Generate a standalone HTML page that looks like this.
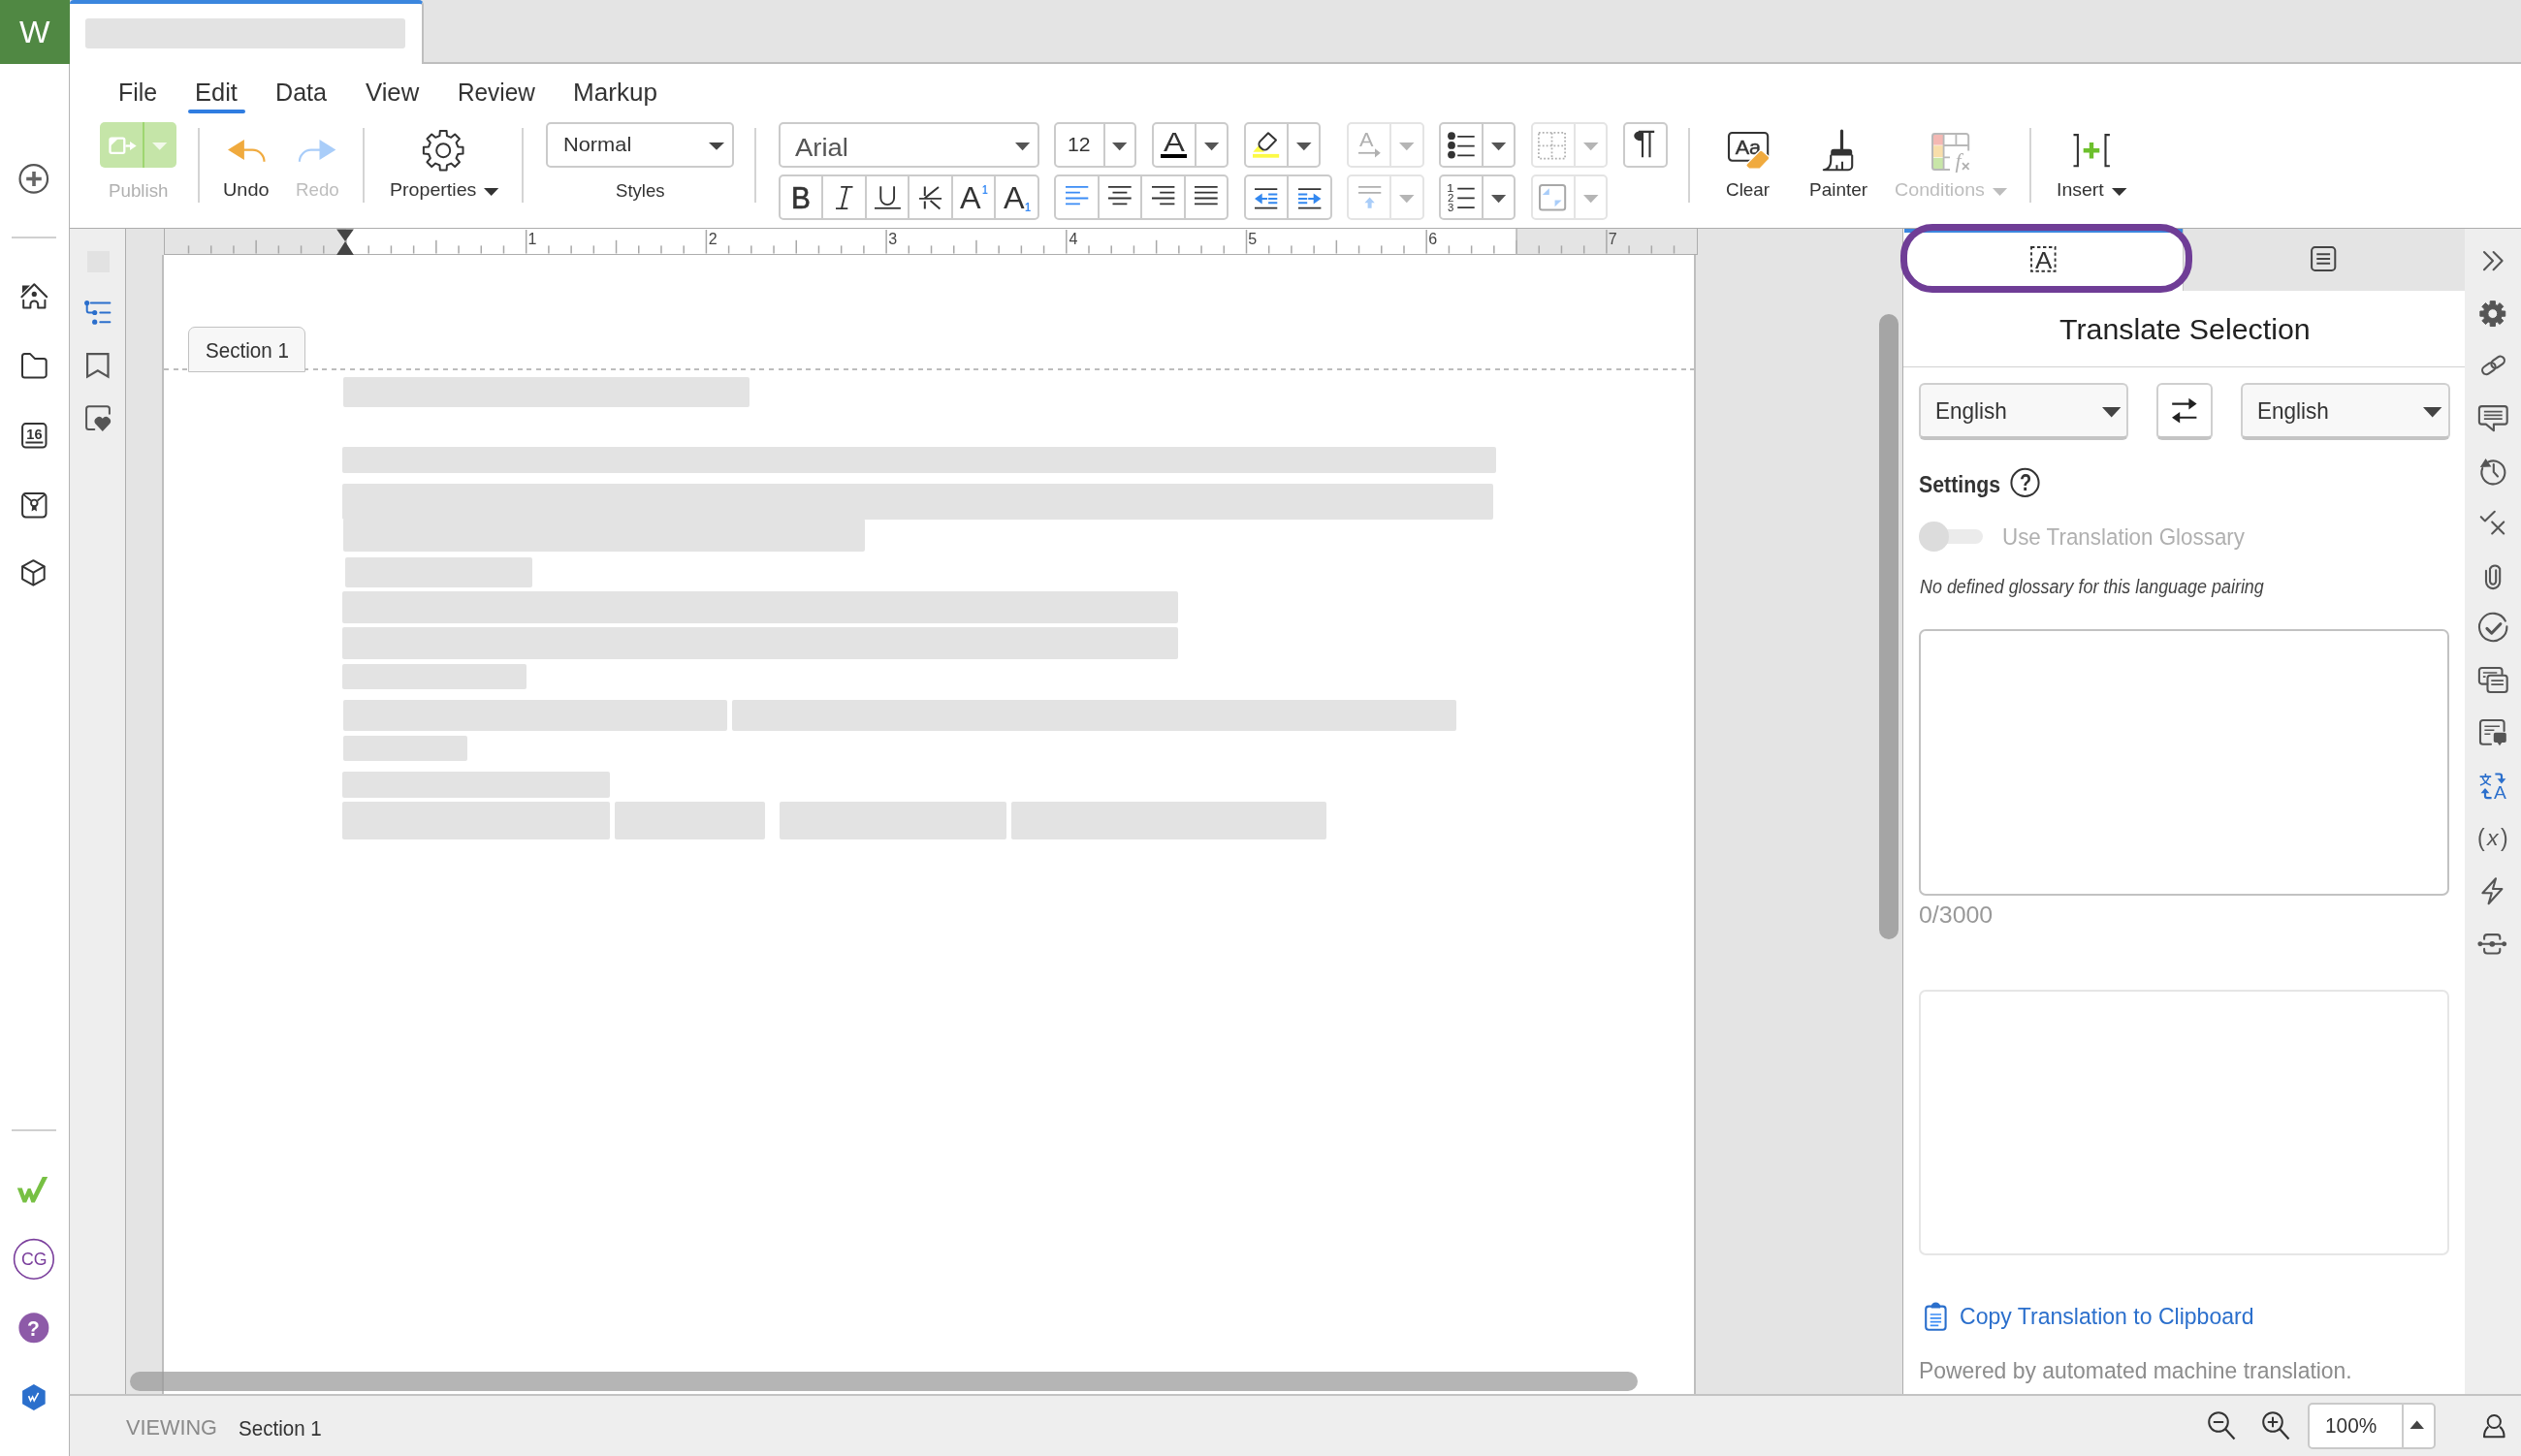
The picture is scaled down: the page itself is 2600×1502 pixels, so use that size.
<!DOCTYPE html>
<html lang="en"><head><meta charset="utf-8"><title>Document editor</title>
<style>
*{box-sizing:border-box;margin:0;padding:0}
html,body{width:2600px;height:1502px;overflow:hidden;background:#fff}
body{position:relative;font-family:"Liberation Sans",sans-serif;color:#333}
div{position:absolute}
.app{left:0;top:0;width:2600px;height:1502px;will-change:transform}
.i{position:absolute;overflow:visible}
.t{position:absolute;white-space:nowrap;line-height:1;transform-origin:0 0;display:block}
.btn{background:#fff;border:2px solid #cbcbcb;border-radius:5px}
.btn.dis{border-color:#e4e4e4}
.vd{background:#cbcbcb;width:2px}
.sep{background:#d4d4d4;width:2px}
</style></head>
<body>
<div class="app">
<!-- top tab bar -->
<div style="left:72.0px;top:0.0px;width:2528.0px;height:66.0px;background:#e4e4e4;border-bottom:2px solid #bebebe"></div>
<div style="left:0.0px;top:0.0px;width:72.0px;height:66.0px;background:#508843"></div>
<span class="t" style="left:20.03px;top:18px;font-size:31.5px;color:#fff;transform:scaleX(1.0584);">W</span>
<div style="left:72.0px;top:0.0px;width:365.0px;height:66.0px;background:#fff;border-top:4px solid #3b86de;border-right:2px solid #bebebe;border-radius:4px 5px 0 0"></div>
<div style="left:72.0px;top:63.0px;width:363.0px;height:4.0px;background:#fff"></div>
<div style="left:88.0px;top:19.0px;width:330.0px;height:31.0px;background:#e3e3e3;border-radius:3px"></div>
<!-- left app sidebar -->
<div style="left:0.0px;top:66.0px;width:72.0px;height:1436.0px;background:#fff;border-right:1px solid #b4b4b4"></div>
<div style="left:12.0px;top:244.0px;width:46.0px;height:2.0px;background:#d0d0d0"></div>
<div style="left:12.0px;top:1165.0px;width:46.0px;height:2.0px;background:#d0d0d0"></div>
<!-- menu bar -->
<span class="t" style="left:122.38px;top:82px;font-size:26px;color:#333;transform:scaleX(0.9562);">File</span>
<span class="t" style="left:201.43px;top:82px;font-size:26px;color:#333;transform:scaleX(0.9788);">Edit</span>
<span class="t" style="left:284.46px;top:82px;font-size:26px;color:#333;transform:scaleX(0.9655);">Data</span>
<span class="t" style="left:377.23px;top:82px;font-size:26px;color:#333;transform:scaleX(0.9879);">View</span>
<span class="t" style="left:472.12px;top:82px;font-size:26px;color:#333;transform:scaleX(0.9362);">Review</span>
<span class="t" style="left:591.37px;top:82px;font-size:26px;color:#333;transform:scaleX(1.0031);">Markup</span>
<div style="left:193.9px;top:112.8px;width:58.9px;height:4.0px;background:#2f7de1;border-radius:2px"></div>
<!-- toolbar -->
<div style="left:72.0px;top:235.0px;width:2528.0px;height:1.0px;background:#adadad"></div>
<div style="left:103.0px;top:126.2px;width:78.9px;height:46.4px;background:#c5e5a8;border-radius:5px"></div>
<div style="left:146.9px;top:126.2px;width:2.4px;height:46.4px;background:#9ed670"></div>
<span class="t" style="left:111.84px;top:188px;font-size:18.5px;color:#b0b0b0;transform:scaleX(1.0133);">Publish</span>
<div class="sep" style="left:204.0px;top:132.0px;width:2.0px;height:76.8px;"></div>
<span class="t" style="left:229.52px;top:187px;font-size:18.5px;color:#333;transform:scaleX(1.0757);">Undo</span>
<span class="t" style="left:304.75px;top:187px;font-size:18.5px;color:#bdbdbd;transform:scaleX(1.0109);">Redo</span>
<div class="sep" style="left:374.0px;top:132.0px;width:2.0px;height:76.8px;"></div>
<span class="t" style="left:401.67px;top:187px;font-size:18.5px;color:#333;transform:scaleX(1.0600);">Properties</span>
<svg class="i" style="left:497.2px;top:191.5px" width="19.3" height="11.9" viewBox="497.2 191.5 19.3 11.9" ><path d="M499.2 193.5H514.5L506.9 201.4Z" fill="#333"/></svg>
<div class="sep" style="left:538.0px;top:132.0px;width:2.0px;height:76.8px;"></div>
<div class="btn" style="left:563.0px;top:126.0px;width:194.0px;height:47.0px;"></div>
<span class="t" style="left:580.62px;top:138px;font-size:21px;color:#333;transform:scaleX(1.0379);">Normal</span>
<svg class="i" style="left:729.0px;top:145.4px" width="20.0" height="11.8" viewBox="729.0 145.4 20.0 11.8" ><path d="M731.0 147.4H747.0L739.0 155.2Z" fill="#444"/></svg>
<span class="t" style="left:634.58px;top:188px;font-size:18.5px;color:#333;transform:scaleX(1.0043);">Styles</span>
<div class="sep" style="left:778.0px;top:132.0px;width:2.0px;height:76.8px;"></div>
<div class="btn" style="left:803.0px;top:126.0px;width:269.0px;height:47.0px;"></div>
<span class="t" style="left:819.97px;top:139px;font-size:26.5px;color:#555;transform:scaleX(1.0365);">Arial</span>
<svg class="i" style="left:1045.0px;top:145.0px" width="19.2" height="12.2" viewBox="1045.0 145.0 19.2 12.2" ><path d="M1047.0 147.0H1062.2L1054.6 155.2Z" fill="#555"/></svg>
<div class="btn" style="left:1087.0px;top:126.0px;width:85.0px;height:47.0px;"></div>
<div class="vd" style="left:1138.0px;top:126.0px;width:2.0px;height:47.0px;"></div>
<span class="t" style="left:1100.66px;top:138px;font-size:21px;color:#333;transform:scaleX(1.0085);">12</span>
<svg class="i" style="left:1145.4px;top:145.0px" width="19.3" height="12.2" viewBox="1145.4 145.0 19.3 12.2" ><path d="M1147.4 147.0H1162.7L1155.1 155.2Z" fill="#555"/></svg>
<div class="btn" style="left:1188.0px;top:126.0px;width:79.0px;height:47.0px;"></div>
<div class="vd" style="left:1232.3px;top:126.0px;width:2.0px;height:47.0px;"></div>
<svg class="i" style="left:1240.0px;top:145.0px" width="19.2" height="12.2" viewBox="1240.0 145.0 19.2 12.2" ><path d="M1242.0 147.0H1257.2L1249.6 155.2Z" fill="#555"/></svg>
<div class="btn" style="left:1283.0px;top:126.0px;width:79.0px;height:47.0px;"></div>
<div class="vd" style="left:1326.9px;top:126.0px;width:2.0px;height:47.0px;"></div>
<svg class="i" style="left:1335.0px;top:145.0px" width="19.6" height="12.2" viewBox="1335.0 145.0 19.6 12.2" ><path d="M1337.0 147.0H1352.6L1344.8 155.2Z" fill="#555"/></svg>
<div class="btn dis" style="left:1389.0px;top:126.0px;width:80.0px;height:47.0px;"></div>
<div class="vd" style="left:1433.4px;top:126.0px;width:2.0px;height:47.0px;background:#e4e4e4"></div>
<svg class="i" style="left:1441.0px;top:145.0px" width="19.5" height="12.2" viewBox="1441.0 145.0 19.5 12.2" ><path d="M1443.0 147.0H1458.5L1450.8 155.2Z" fill="#b5b5b5"/></svg>
<div class="btn" style="left:1484.0px;top:126.0px;width:79.0px;height:47.0px;"></div>
<div class="vd" style="left:1527.9px;top:126.0px;width:2.0px;height:47.0px;"></div>
<svg class="i" style="left:1536.2px;top:145.0px" width="19.2" height="12.2" viewBox="1536.2 145.0 19.2 12.2" ><path d="M1538.2 147.0H1553.4L1545.8 155.2Z" fill="#555"/></svg>
<div class="btn dis" style="left:1579.0px;top:126.0px;width:79.0px;height:47.0px;"></div>
<div class="vd" style="left:1623.1px;top:126.0px;width:2.0px;height:47.0px;background:#e4e4e4"></div>
<svg class="i" style="left:1630.5px;top:145.0px" width="19.5" height="12.2" viewBox="1630.5 145.0 19.5 12.2" ><path d="M1632.5 147.0H1648.0L1640.2 155.2Z" fill="#b5b5b5"/></svg>
<div class="btn" style="left:1674.0px;top:126.0px;width:46.0px;height:47.0px;"></div>
<div class="btn" style="left:803.0px;top:180.0px;width:269.0px;height:47.0px;"></div>
<div class="vd" style="left:846.9px;top:180.0px;width:2.0px;height:47.0px;"></div>
<div class="vd" style="left:891.8px;top:180.0px;width:2.0px;height:47.0px;"></div>
<div class="vd" style="left:936.1px;top:180.0px;width:2.0px;height:47.0px;"></div>
<div class="vd" style="left:980.8px;top:180.0px;width:2.0px;height:47.0px;"></div>
<div class="vd" style="left:1025.3px;top:180.0px;width:2.0px;height:47.0px;"></div>
<div class="btn" style="left:1087.0px;top:180.0px;width:180.0px;height:47.0px;"></div>
<div class="vd" style="left:1131.8px;top:180.0px;width:2.0px;height:47.0px;"></div>
<div class="vd" style="left:1176.3px;top:180.0px;width:2.0px;height:47.0px;"></div>
<div class="vd" style="left:1220.8px;top:180.0px;width:2.0px;height:47.0px;"></div>
<div class="btn" style="left:1283.0px;top:180.0px;width:91.0px;height:47.0px;"></div>
<div class="vd" style="left:1326.9px;top:180.0px;width:2.0px;height:47.0px;"></div>
<div class="btn dis" style="left:1389.0px;top:180.0px;width:80.0px;height:47.0px;"></div>
<div class="vd" style="left:1433.4px;top:180.0px;width:2.0px;height:47.0px;background:#e4e4e4"></div>
<svg class="i" style="left:1441.0px;top:199.0px" width="19.5" height="12.2" viewBox="1441.0 199.0 19.5 12.2" ><path d="M1443.0 201.0H1458.5L1450.8 209.2Z" fill="#b5b5b5"/></svg>
<div class="btn" style="left:1484.0px;top:180.0px;width:79.0px;height:47.0px;"></div>
<div class="vd" style="left:1527.9px;top:180.0px;width:2.0px;height:47.0px;"></div>
<svg class="i" style="left:1536.2px;top:199.0px" width="19.2" height="12.2" viewBox="1536.2 199.0 19.2 12.2" ><path d="M1538.2 201.0H1553.4L1545.8 209.2Z" fill="#555"/></svg>
<div class="btn dis" style="left:1579.0px;top:180.0px;width:79.0px;height:47.0px;"></div>
<div class="vd" style="left:1623.1px;top:180.0px;width:2.0px;height:47.0px;background:#e4e4e4"></div>
<svg class="i" style="left:1630.5px;top:199.0px" width="19.5" height="12.2" viewBox="1630.5 199.0 19.5 12.2" ><path d="M1632.5 201.0H1648.0L1640.2 209.2Z" fill="#b5b5b5"/></svg>
<div class="sep" style="left:1741.3px;top:132.0px;width:2.0px;height:76.8px;"></div>
<span class="t" style="left:1780.26px;top:187px;font-size:18.5px;color:#333;transform:scaleX(1.0209);">Clear</span>
<span class="t" style="left:1866.03px;top:187px;font-size:18.5px;color:#333;transform:scaleX(1.0245);">Painter</span>
<span class="t" style="left:1953.51px;top:187px;font-size:18.5px;color:#bdbdbd;transform:scaleX(1.0632);">Conditions</span>
<svg class="i" style="left:2052.6px;top:191.5px" width="19.1" height="11.9" viewBox="2052.6 191.5 19.1 11.9" ><path d="M2054.6 193.5H2069.7L2062.1 201.4Z" fill="#bdbdbd"/></svg>
<div class="sep" style="left:2092.6px;top:132.0px;width:2.0px;height:76.8px;"></div>
<span class="t" style="left:2120.59px;top:187px;font-size:18.5px;color:#333;transform:scaleX(1.0543);">Insert</span>
<svg class="i" style="left:2176.2px;top:191.5px" width="19.5" height="11.9" viewBox="2176.2 191.5 19.5 11.9" ><path d="M2178.2 193.5H2193.7L2185.9 201.4Z" fill="#333"/></svg>
<!-- outline sidebar -->
<div style="left:72.0px;top:236.0px;width:58.0px;height:1203.0px;background:#eeeeee;border-right:1px solid #adadad"></div>
<div style="left:90.0px;top:258.5px;width:23.0px;height:22.0px;background:#e2e2e2"></div>
<!-- document area -->
<div style="left:130.0px;top:236.0px;width:1832.0px;height:1203.0px;background:#e4e4e4"></div>
<div style="left:167.0px;top:263.0px;width:1582.0px;height:1176.0px;background:#fff;border-left:2px solid #bebebe;border-right:2px solid #bebebe"></div>
<div style="left:169.0px;top:380.0px;width:1578.0px;height:2.0px;background:repeating-linear-gradient(90deg,#bdbdbd 0 5px,transparent 5px 9.6px)"></div>
<div style="left:194.4px;top:337.0px;width:120.6px;height:47.4px;background:#f7f7f7;border:1px solid #c2c2c2;border-radius:7px 7px 0 0"></div>
<span class="t" style="left:211.61px;top:352px;font-size:21.5px;color:#333;transform:scaleX(0.9591);">Section 1</span>
<div style="left:354.0px;top:389.0px;width:419.0px;height:31.0px;background:#e3e3e3;border-radius:2px"></div>
<div style="left:353.0px;top:461.0px;width:1190.0px;height:27.0px;background:#e3e3e3;border-radius:2px"></div>
<div style="left:353.0px;top:499.0px;width:1187.0px;height:37.0px;background:#e3e3e3;border-radius:2px"></div>
<div style="left:354.0px;top:535.0px;width:538.0px;height:34.0px;background:#e3e3e3;border-radius:2px"></div>
<div style="left:356.0px;top:575.0px;width:193.0px;height:31.0px;background:#e3e3e3;border-radius:2px"></div>
<div style="left:353.0px;top:610.0px;width:862.0px;height:33.0px;background:#e3e3e3;border-radius:2px"></div>
<div style="left:353.0px;top:647.0px;width:862.0px;height:33.0px;background:#e3e3e3;border-radius:2px"></div>
<div style="left:353.0px;top:685.0px;width:190.0px;height:26.0px;background:#e3e3e3;border-radius:2px"></div>
<div style="left:354.0px;top:722.0px;width:396.0px;height:32.0px;background:#e3e3e3;border-radius:2px"></div>
<div style="left:755.0px;top:722.0px;width:747.0px;height:32.0px;background:#e3e3e3;border-radius:2px"></div>
<div style="left:354.0px;top:759.0px;width:128.0px;height:26.0px;background:#e3e3e3;border-radius:2px"></div>
<div style="left:353.0px;top:796.0px;width:276.0px;height:27.0px;background:#e3e3e3;border-radius:2px"></div>
<div style="left:353.0px;top:827.0px;width:276.0px;height:39.0px;background:#e3e3e3;border-radius:2px"></div>
<div style="left:634.0px;top:827.0px;width:155.0px;height:39.0px;background:#e3e3e3;border-radius:2px"></div>
<div style="left:804.0px;top:827.0px;width:234.0px;height:39.0px;background:#e3e3e3;border-radius:2px"></div>
<div style="left:1043.0px;top:827.0px;width:325.0px;height:39.0px;background:#e3e3e3;border-radius:2px"></div>
<div style="left:1938.0px;top:324.0px;width:20.0px;height:645.0px;background:#a5a5a5;border-radius:10px"></div>
<div style="left:134.0px;top:1415.0px;width:1555.0px;height:20.0px;background:rgba(150,150,150,.7);border-radius:10px"></div>
<!-- ruler -->
<svg class="i" style="left:167.0px;top:234.0px" width="1586.0" height="31.0" viewBox="167.0 234.0 1586.0 31.0" ><rect x="169" y="236" width="1582" height="27" fill="#e4e4e4"/><rect x="357.0" y="236" width="1207.05" height="27" fill="#fff"/><rect x="193.76" y="253.4" width="1.5" height="8.1" fill="#a8a8a8"/><rect x="216.98" y="253.4" width="1.5" height="8.1" fill="#a8a8a8"/><rect x="240.19" y="253.4" width="1.5" height="8.1" fill="#a8a8a8"/><rect x="263.40" y="247.8" width="1.5" height="13.7" fill="#a8a8a8"/><rect x="286.61" y="253.4" width="1.5" height="8.1" fill="#a8a8a8"/><rect x="309.82" y="253.4" width="1.5" height="8.1" fill="#a8a8a8"/><rect x="333.04" y="253.4" width="1.5" height="8.1" fill="#a8a8a8"/><rect x="356.25" y="237" width="1.5" height="24.5" fill="#a8a8a8"/><rect x="379.46" y="253.4" width="1.5" height="8.1" fill="#a8a8a8"/><rect x="402.68" y="253.4" width="1.5" height="8.1" fill="#a8a8a8"/><rect x="425.89" y="253.4" width="1.5" height="8.1" fill="#a8a8a8"/><rect x="449.10" y="247.8" width="1.5" height="13.7" fill="#a8a8a8"/><rect x="472.31" y="253.4" width="1.5" height="8.1" fill="#a8a8a8"/><rect x="495.52" y="253.4" width="1.5" height="8.1" fill="#a8a8a8"/><rect x="518.74" y="253.4" width="1.5" height="8.1" fill="#a8a8a8"/><rect x="541.95" y="237" width="1.5" height="24.5" fill="#a8a8a8"/><rect x="565.16" y="253.4" width="1.5" height="8.1" fill="#a8a8a8"/><rect x="588.38" y="253.4" width="1.5" height="8.1" fill="#a8a8a8"/><rect x="611.59" y="253.4" width="1.5" height="8.1" fill="#a8a8a8"/><rect x="634.80" y="247.8" width="1.5" height="13.7" fill="#a8a8a8"/><rect x="658.01" y="253.4" width="1.5" height="8.1" fill="#a8a8a8"/><rect x="681.22" y="253.4" width="1.5" height="8.1" fill="#a8a8a8"/><rect x="704.44" y="253.4" width="1.5" height="8.1" fill="#a8a8a8"/><rect x="727.65" y="237" width="1.5" height="24.5" fill="#a8a8a8"/><rect x="750.86" y="253.4" width="1.5" height="8.1" fill="#a8a8a8"/><rect x="774.08" y="253.4" width="1.5" height="8.1" fill="#a8a8a8"/><rect x="797.29" y="253.4" width="1.5" height="8.1" fill="#a8a8a8"/><rect x="820.50" y="247.8" width="1.5" height="13.7" fill="#a8a8a8"/><rect x="843.71" y="253.4" width="1.5" height="8.1" fill="#a8a8a8"/><rect x="866.92" y="253.4" width="1.5" height="8.1" fill="#a8a8a8"/><rect x="890.14" y="253.4" width="1.5" height="8.1" fill="#a8a8a8"/><rect x="913.35" y="237" width="1.5" height="24.5" fill="#a8a8a8"/><rect x="936.56" y="253.4" width="1.5" height="8.1" fill="#a8a8a8"/><rect x="959.77" y="253.4" width="1.5" height="8.1" fill="#a8a8a8"/><rect x="982.99" y="253.4" width="1.5" height="8.1" fill="#a8a8a8"/><rect x="1006.20" y="247.8" width="1.5" height="13.7" fill="#a8a8a8"/><rect x="1029.41" y="253.4" width="1.5" height="8.1" fill="#a8a8a8"/><rect x="1052.62" y="253.4" width="1.5" height="8.1" fill="#a8a8a8"/><rect x="1075.84" y="253.4" width="1.5" height="8.1" fill="#a8a8a8"/><rect x="1099.05" y="237" width="1.5" height="24.5" fill="#a8a8a8"/><rect x="1122.26" y="253.4" width="1.5" height="8.1" fill="#a8a8a8"/><rect x="1145.47" y="253.4" width="1.5" height="8.1" fill="#a8a8a8"/><rect x="1168.69" y="253.4" width="1.5" height="8.1" fill="#a8a8a8"/><rect x="1191.90" y="247.8" width="1.5" height="13.7" fill="#a8a8a8"/><rect x="1215.11" y="253.4" width="1.5" height="8.1" fill="#a8a8a8"/><rect x="1238.32" y="253.4" width="1.5" height="8.1" fill="#a8a8a8"/><rect x="1261.54" y="253.4" width="1.5" height="8.1" fill="#a8a8a8"/><rect x="1284.75" y="237" width="1.5" height="24.5" fill="#a8a8a8"/><rect x="1307.96" y="253.4" width="1.5" height="8.1" fill="#a8a8a8"/><rect x="1331.17" y="253.4" width="1.5" height="8.1" fill="#a8a8a8"/><rect x="1354.39" y="253.4" width="1.5" height="8.1" fill="#a8a8a8"/><rect x="1377.60" y="247.8" width="1.5" height="13.7" fill="#a8a8a8"/><rect x="1400.81" y="253.4" width="1.5" height="8.1" fill="#a8a8a8"/><rect x="1424.02" y="253.4" width="1.5" height="8.1" fill="#a8a8a8"/><rect x="1447.24" y="253.4" width="1.5" height="8.1" fill="#a8a8a8"/><rect x="1470.45" y="237" width="1.5" height="24.5" fill="#a8a8a8"/><rect x="1493.66" y="253.4" width="1.5" height="8.1" fill="#a8a8a8"/><rect x="1516.88" y="253.4" width="1.5" height="8.1" fill="#a8a8a8"/><rect x="1540.09" y="253.4" width="1.5" height="8.1" fill="#a8a8a8"/><rect x="1563.30" y="247.8" width="1.5" height="13.7" fill="#a8a8a8"/><rect x="1586.51" y="253.4" width="1.5" height="8.1" fill="#a8a8a8"/><rect x="1609.72" y="253.4" width="1.5" height="8.1" fill="#a8a8a8"/><rect x="1632.94" y="253.4" width="1.5" height="8.1" fill="#a8a8a8"/><rect x="1656.15" y="237" width="1.5" height="24.5" fill="#a8a8a8"/><rect x="1679.36" y="253.4" width="1.5" height="8.1" fill="#a8a8a8"/><rect x="1702.57" y="253.4" width="1.5" height="8.1" fill="#a8a8a8"/><rect x="1725.79" y="253.4" width="1.5" height="8.1" fill="#a8a8a8"/><rect x="169" y="262" width="1582" height="1" fill="#adadad"/><rect x="169" y="236" width="1" height="27" fill="#adadad"/><rect x="1750" y="236" width="1" height="27" fill="#adadad"/><rect x="1563.3" y="236" width="1.5" height="27" fill="#b5b5b5"/><path d="M347.1 236.5H364.9L356.0 249Z M347.1 263H364.9L356.0 249Z" fill="#444"/></svg>
<span class="t" style="left:544.41px;top:239px;font-size:16px;color:#444;transform:scaleX(1.0000);">1</span>
<span class="t" style="left:730.63px;top:239px;font-size:16px;color:#444;transform:scaleX(1.0000);">2</span>
<span class="t" style="left:916.33px;top:239px;font-size:16px;color:#444;transform:scaleX(1.0000);">3</span>
<span class="t" style="left:1102.38px;top:239px;font-size:16px;color:#444;transform:scaleX(1.0000);">4</span>
<span class="t" style="left:1287.37px;top:239px;font-size:16px;color:#444;transform:scaleX(1.0000);">5</span>
<span class="t" style="left:1473.15px;top:239px;font-size:16px;color:#444;transform:scaleX(1.0000);">6</span>
<span class="t" style="left:1658.85px;top:239px;font-size:16px;color:#444;transform:scaleX(1.0000);">7</span>
<!-- status bar -->
<div style="left:71.0px;top:1438.0px;width:2529.0px;height:64.0px;background:#eeeeee;border-top:2px solid #c3c3c3;border-left:1px solid #b4b4b4"></div>
<span class="t" style="left:130.04px;top:1462px;font-size:22.5px;color:#8a8a8a;transform:scaleX(0.9637);">VIEWING</span>
<span class="t" style="left:246.20px;top:1463px;font-size:22.5px;color:#333;transform:scaleX(0.9145);">Section 1</span>
<div style="left:2380.0px;top:1447.0px;width:131.5px;height:48.0px;background:#fff;border:2px solid #c9c9c9;border-radius:5px"></div>
<div class="vd" style="left:2477.0px;top:1447.0px;width:2.0px;height:48.0px;"></div>
<span class="t" style="left:2398.41px;top:1460px;font-size:22px;color:#333;transform:scaleX(0.9460);">100%</span>
<svg class="i" style="left:2482.0px;top:1462.0px" width="20.0" height="14.0" viewBox="2482.0 1462.0 20.0 14.0" ><path d="M2485.5 1474H2500L2492.7 1465.5Z" fill="#444"/></svg>
<!-- right panel -->
<div style="left:2542.0px;top:236.0px;width:58.0px;height:1202.0px;background:#eeeeee"></div>
<div style="left:1962.0px;top:236.0px;width:580.0px;height:1202.0px;background:#fff;border-left:1px solid #adadad"></div>
<div style="left:2252.0px;top:236.0px;width:290.0px;height:64.0px;background:#e4e4e4"></div>
<div style="left:1964.0px;top:236.0px;width:288.0px;height:4.0px;background:#3b86de"></div>
<div style="left:1963.0px;top:235.5px;width:289.0px;height:64.5px;border-right:1px solid #c8c8c8"></div>
<div style="left:1960.0px;top:231.0px;width:301.0px;height:71.4px;border:7px solid #6f3d96;border-radius:33px"></div>
<span class="t" style="left:2123.91px;top:325px;font-size:30px;color:#222;transform:scaleX(1.0115);">Translate Selection</span>
<div style="left:1963.0px;top:378.0px;width:579.0px;height:1.0px;background:#d2d2d2"></div>
<div style="left:1979.0px;top:395.0px;width:215.5px;height:59.4px;background:#f8f8f8;border:2px solid #cfcfcf;border-bottom:4px solid #c4c4c4;border-radius:6px"></div>
<div style="left:2224.0px;top:395.0px;width:58.0px;height:59.4px;background:#fff;border:2px solid #cfcfcf;border-bottom:4px solid #c4c4c4;border-radius:6px"></div>
<div style="left:2311.0px;top:395.0px;width:215.5px;height:59.4px;background:#f8f8f8;border:2px solid #cfcfcf;border-bottom:4px solid #c4c4c4;border-radius:6px"></div>
<span class="t" style="left:1996.01px;top:412px;font-size:24px;color:#333;transform:scaleX(0.9383);">English</span>
<span class="t" style="left:2327.81px;top:412px;font-size:24px;color:#333;transform:scaleX(0.9383);">English</span>
<svg class="i" style="left:2165.6px;top:418.0px" width="23.4" height="14.5" viewBox="2165.6 418.0 23.4 14.5" ><path d="M2167.6 420.0H2187.0L2177.3 430.5Z" fill="#444"/></svg>
<svg class="i" style="left:2497.4px;top:418.0px" width="23.4" height="14.5" viewBox="2497.4 418.0 23.4 14.5" ><path d="M2499.4 420.0H2518.8L2509.1 430.5Z" fill="#444"/></svg>
<span class="t" style="left:1979.45px;top:489px;font-size:23.5px;color:#333;transform:scaleX(0.9065);font-weight:bold">Settings</span>
<div style="left:1990.0px;top:546.0px;width:55.0px;height:15.0px;background:#ebebeb;border-radius:8px"></div>
<div style="left:1979.4px;top:538.2px;width:30.6px;height:30.6px;background:#dcdcdc;border-radius:50%"></div>
<span class="t" style="left:2064.50px;top:542px;font-size:24.5px;color:#b0b0b0;transform:scaleX(0.9135);">Use Translation Glossary</span>
<span class="t" style="left:1979.84px;top:596px;font-size:19.5px;color:#444;transform:scaleX(0.9194);font-style:italic">No defined glossary for this language pairing</span>
<div style="left:1979.4px;top:649.0px;width:546.6px;height:275.0px;border:2px solid #c2c2c2;border-radius:7px;background:#fff"></div>
<span class="t" style="left:1979.32px;top:933px;font-size:23px;color:#999;transform:scaleX(1.0836);">0/3000</span>
<div style="left:1979.4px;top:1020.6px;width:546.6px;height:274.8px;border:2px solid #e6e6e6;border-radius:7px;background:#fff"></div>
<span class="t" style="left:2020.75px;top:1346px;font-size:24.5px;color:#2b6fcc;transform:scaleX(0.9405);">Copy Translation to Clipboard</span>
<span class="t" style="left:1979.00px;top:1402px;font-size:24.5px;color:#8c8c8c;transform:scaleX(0.9344);">Powered by automated machine translation.</span>
<!-- icons: left sidebar -->
<svg class="i" style="left:17.0px;top:166.5px" width="35.5" height="35.0" viewBox="17.0 166.5 35.5 35.0" ><circle cx="34.8" cy="183.9" r="14.25" fill="none" stroke="#555" stroke-width="2.2"/><path d="M27.2 184H42.8M35 176.4V191.6" stroke="#666" stroke-width="3.6" fill="none"/></svg>
<svg class="i" style="left:19.6px;top:290.0px" width="30.5" height="30.8" viewBox="19.6 290.0 30.5 30.8" ><path d="M22 306.3L34.9 293.3L47.8 306.3" fill="none" stroke="#333" stroke-width="2" stroke-linecap="round" stroke-linejoin="round"/><path d="M23.8 309.8V317.6H31V314.3A3.9 3.9 0 0 1 38.8 314.3V317.6H46V309.8" fill="none" stroke="#333" stroke-width="2" stroke-linecap="round" stroke-linejoin="round"/><circle cx="34.9" cy="303.4" r="2.6" fill="#333"/><path d="M22.6 294.6H30.6L22.6 302.6Z" fill="#333"/></svg>
<svg class="i" style="left:19.5px;top:361.8px" width="30.8" height="30.5" viewBox="19.5 361.8 30.8 30.5" ><path d="M25 364.9H30.6L35.6 369.9H44.7A2.5 2.5 0 0 1 47.2 372.4V386.7A2.5 2.5 0 0 1 44.7 389.2H25A2.5 2.5 0 0 1 22.5 386.7V367.4A2.5 2.5 0 0 1 25 364.9Z" fill="none" stroke="#333" stroke-width="2" stroke-linecap="round" stroke-linejoin="round"/></svg>
<svg class="i" style="left:19.6px;top:433.5px" width="30.5" height="30.5" viewBox="19.6 433.5 30.5 30.5" ><rect x="22.7" y="436.6" width="24.4" height="24.4" rx="3.5" fill="none" stroke="#333" stroke-width="2" stroke-linecap="round" stroke-linejoin="round"/><path d="M26 456H44" stroke="#333" stroke-width="2" fill="none"/><text x="35" y="452.6" font-family="Liberation Sans, sans-serif" font-weight="bold" font-size="14.5" text-anchor="middle" fill="#333">16</text></svg>
<svg class="i" style="left:19.6px;top:505.7px" width="30.5" height="30.4" viewBox="19.6 505.7 30.5 30.4" ><rect x="22.7" y="508.8" width="24.4" height="24.4" rx="3.5" fill="none" stroke="#333" stroke-width="2" stroke-linecap="round" stroke-linejoin="round"/><path d="M23.5 509.6L31.6 516.2M46.3 509.6L38.2 516.2" stroke="#333" stroke-width="1.8" fill="none"/><circle cx="34.9" cy="518.6" r="3.3" fill="none" stroke="#333" stroke-width="1.9"/><path d="M32.9 521.5L32.2 527.2L34.9 525.4L37.6 527.2L36.9 521.5Z" fill="#333"/></svg>
<svg class="i" style="left:19.6px;top:575.4px" width="28.8" height="31.7" viewBox="19.6 575.4 28.8 31.7" ><path d="M34 578.6L45.3 584.7V597.7L34 604L22.7 597.7V584.7Z" fill="none" stroke="#333" stroke-width="2" stroke-linecap="round" stroke-linejoin="round"/><path d="M22.9 584.9L34 591L45.1 584.9M34 591V603.6" fill="none" stroke="#333" stroke-width="2" stroke-linecap="round" stroke-linejoin="round"/></svg>
<svg class="i" style="left:15.8px;top:1211.6px" width="35.2" height="30.5" viewBox="15.8 1211.6 35.2 30.5" ><path d="M17.6 1225.2L22.6 1225.2L25.3 1233.2L28.6 1225.6L31.4 1225.6L34.3 1232.6L43.6 1213.6L49 1213.6L35.6 1240.1L32.2 1240.1L29.9 1233.6L27 1240.1L23.4 1240.1Z" fill="#77c043"/></svg>
<svg class="i" style="left:12.0px;top:1275.5px" width="46.0" height="46.0" viewBox="12.0 1275.5 46.0 46.0" ><circle cx="34.9" cy="1298.4" r="20.3" fill="#fff" stroke="#7a3e9c" stroke-width="1.6"/></svg>
<span class="t" style="left:21.91px;top:1290px;font-size:18px;color:#7a3e9c;transform:scaleX(0.9834);">CG</span>
<svg class="i" style="left:17.0px;top:1352.0px" width="36.0" height="36.0" viewBox="17.0 1352.0 36.0 36.0" ><circle cx="34.9" cy="1369.7" r="15.5" fill="#8d5aa8"/></svg>
<span class="t" style="left:28.34px;top:1360px;font-size:22px;color:#fff;transform:scaleX(0.9516);font-weight:bold">?</span>
<svg class="i" style="left:21.0px;top:1426.2px" width="27.7" height="31.0" viewBox="21.0 1426.2 27.7 31.0" ><path d="M34.9 1428.2L46.7 1435V1448.5L34.9 1455.2L23.1 1448.5V1435Z" fill="#2b6fcc"/><path d="M29.6 1440.3L31.5 1445L33.6 1441.2L35.2 1445L39.6 1437" fill="none" stroke="#fff" stroke-width="1.6"/></svg>
<!-- icons: outline sidebar -->
<svg class="i" style="left:85.2px;top:307.7px" width="31.2" height="28.9" viewBox="85.2 307.7 31.2 28.9" ><circle cx="89.9" cy="312.3" r="2.6" fill="#2b6fcc"/><circle cx="97.9" cy="322.2" r="2.6" fill="#2b6fcc"/><circle cx="97.9" cy="331.9" r="2.6" fill="#2b6fcc"/><path d="M94 312.3H113.6M103.5 322.2H113.6M103.5 331.9H113.6M89.9 312.3V320.2A2 2 0 0 0 91.9 322.2H97.9" fill="none" stroke="#2b6fcc" stroke-width="2" stroke-linecap="round"/></svg>
<svg class="i" style="left:87.0px;top:362.0px" width="27.6" height="30.1" viewBox="87.0 362.0 27.6 30.1" ><path d="M90.1 365.1H111.5V388.6L100.8 382.2L90.1 388.6Z" fill="none" stroke="#555" stroke-width="2.2" stroke-linejoin="miter"/></svg>
<svg class="i" style="left:85.7px;top:416.5px" width="30.3" height="30.5" viewBox="85.7 416.5 30.3 30.5" ><g transform="translate(0 -0.8)"><path d="M112.6 427V422.1A2.5 2.5 0 0 0 110.1 419.6H91.3A2.5 2.5 0 0 0 88.8 422.1V440.9A2.5 2.5 0 0 0 91.3 443.4H97" fill="none" stroke="#555" stroke-width="2" stroke-linecap="round" stroke-linejoin="round"/><path d="M105.5 445.3L98 437.4A4.6 4.6 0 0 1 105.5 432.1A4.6 4.6 0 0 1 113 437.4Z" fill="#555"/></g></svg>
<!-- icons: toolbar -->
<svg class="i" style="left:110.0px;top:139.7px" width="32.7" height="21.1" viewBox="110.0 139.7 32.7 21.1" ><rect x="113.5" y="142.4" width="14.8" height="15.2" rx="1.6" fill="none" stroke="#fff" stroke-width="2.3"/><path d="M113.5 142.4H122.2L113.5 150.6Z" fill="#fff"/><path d="M129.4 150.2H135" stroke="#fff" stroke-width="2.3" fill="none"/><path d="M134 145.6L140.7 150.2L134 154.8Z" fill="#fff"/></svg>
<svg class="i" style="left:155.1px;top:144.9px" width="19.3" height="11.8" viewBox="155.1 144.9 19.3 11.8" ><path d="M157.1 146.9H172.4L164.8 154.7Z" fill="#f2f9ea"/></svg>
<svg class="i" style="left:232.5px;top:142.1px" width="42.5" height="27.3" viewBox="232.5 142.1 42.5 27.3" ><path d="M234.5 154.7L251.4 144.1V165.2Z" fill="#f0aa3e"/><path d="M250 154.8H260A12 12 0 0 1 272 166.8" fill="none" stroke="#f0aa3e" stroke-width="2.2"/></svg>
<svg class="i" style="left:305.7px;top:142.1px" width="42.4" height="27.3" viewBox="305.7 142.1 42.4 27.3" ><path d="M346.1 154.7L329.2 144.1V165.2Z" fill="#a9cdf9"/><path d="M330.6 154.8H320.6A12 12 0 0 0 308.6 166.8" fill="none" stroke="#a9cdf9" stroke-width="2.2"/></svg>
<svg class="i" style="left:434.2px;top:132.2px" width="46.5" height="46.4" viewBox="434.2 132.2 46.5 46.4" ><path d="M453.64 140.26L454.02 135.08L460.78 135.08L461.16 140.26L465.45 142.04L469.38 138.64L474.16 143.42L470.76 147.35L472.54 151.64L477.72 152.02L477.72 158.78L472.54 159.16L470.76 163.45L474.16 167.38L469.38 172.16L465.45 168.76L461.16 170.54L460.78 175.72L454.02 175.72L453.64 170.54L449.35 168.76L445.42 172.16L440.64 167.38L444.04 163.45L442.26 159.16L437.08 158.78L437.08 152.02L442.26 151.64L444.04 147.35L440.64 143.42L445.42 138.64L449.35 142.04Z" fill="none" stroke="#333" stroke-width="2" stroke-linejoin="round"/><circle cx="457.4" cy="155.4" r="7" fill="none" stroke="#333" stroke-width="2"/></svg>
<span class="t" style="left:1200.40px;top:132px;font-size:28.5px;color:#333;transform:scaleX(1.1500);">A</span>
<div style="left:1197.3px;top:158.9px;width:27.2px;height:3.8px;background:#000"></div>
<svg class="i" style="left:1290.0px;top:134.0px" width="31.2" height="30.7" viewBox="1290.0 134.0 31.2 30.7" ><path d="M1292.4 156.8L1298.5 149.6L1304 156.8Z" fill="#fcfa45"/><rect x="1292" y="158.9" width="27.2" height="3.8" fill="#fcfa45"/><path d="M1308 137.2L1316 144.6L1307.6 153.2A4.6 4.6 0 0 1 1301.2 153.3L1299.8 152A4.6 4.6 0 0 1 1299.7 145.6Z" fill="#fff" stroke="#333" stroke-width="2" stroke-linejoin="round"/></svg>
<span class="t" style="left:1402.47px;top:133px;font-size:21px;color:#b0b0b0;transform:scaleX(1.0322);">A</span>
<svg class="i" style="left:1398.6px;top:151.0px" width="26.9" height="13.0" viewBox="1398.6 151.0 26.9 13.0" ><path d="M1400.6 157.8H1419" stroke="#b0b0b0" stroke-width="1.8" fill="none"/><path d="M1417.6 153.2L1423.4 157.8L1417.6 162.4Z" fill="#b0b0b0"/></svg>
<svg class="i" style="left:1491.0px;top:133.5px" width="32.0" height="31.7" viewBox="1491.0 133.5 32.0 31.7" ><circle cx="1497" cy="139.7" r="3.9" fill="#333"/><circle cx="1497" cy="149.4" r="3.9" fill="#333"/><circle cx="1497" cy="159.1" r="3.9" fill="#333"/><path d="M1503.2 140.4H1520.7M1503.2 150.1H1520.7M1503.2 159.8H1520.7" stroke="#333" stroke-width="1.7" fill="none"/></svg>
<svg class="i" style="left:1584.4px;top:134.0px" width="33.0" height="32.6" viewBox="1584.4 134.0 33.0 32.6" ><path d="M1587.3 136.9H1614.5V163.7H1587.3ZM1600.9 136.9V163.7M1587.3 150.3H1614.5" fill="none" stroke="#b0b0b0" stroke-width="1.8" stroke-dasharray="1.8 2.1"/></svg>
<svg class="i" style="left:1683.0px;top:133.4px" width="25.4" height="31.2" viewBox="1683.0 133.4 25.4 31.2" ><path d="M1690 136.3H1706.2M1694 136.3V162.6M1701.5 136.3V162.6" stroke="#333" stroke-width="2.1" fill="none"/><path d="M1694.6 135.3H1692.4A7.2 5.15 0 0 0 1692.4 145.6H1694.6Z" fill="#333"/></svg>
<span class="t" style="left:815.95px;top:189px;font-size:31.5px;color:#333;transform:scaleX(0.9457);-webkit-text-stroke:0.7px #333">B</span>
<svg class="i" style="left:860.0px;top:190.0px" width="21.5" height="28.0" viewBox="860.0 190.0 21.5 28.0" ><path d="M867.2 192.9H879.5M862 215.1H874.3M873.5 192.9L868 215.1" stroke="#333" stroke-width="1.9" fill="none"/></svg>
<svg class="i" style="left:899.8px;top:190.0px" width="30.9" height="28.0" viewBox="899.8 190.0 30.9 28.0" ><path d="M908.1 192.2V204.2A6.9 6.9 0 0 0 921.9 204.2V192.2" stroke="#333" stroke-width="1.9" fill="none"/><path d="M901.8 214.8H928.7" stroke="#333" stroke-width="1.8" fill="none"/></svg>
<svg class="i" style="left:946.0px;top:190.0px" width="27.1" height="28.0" viewBox="946.0 190.0 27.1 28.0" ><path d="M953.8 192.6V202M953.8 207.4V215.6M953.8 204.4L968 193M959.6 207L969.4 215.4" stroke="#333" stroke-width="2" fill="none"/><path d="M948 204.9H971.1" stroke="#333" stroke-width="1.7" fill="none"/></svg>
<span class="t" style="left:989.96px;top:189px;font-size:31.5px;color:#333;transform:scaleX(1.0266);">A</span>
<span class="t" style="left:1012.80px;top:189px;font-size:13.5px;color:#3b8cf5;transform:scaleX(0.7581);font-weight:bold">1</span>
<span class="t" style="left:1034.66px;top:189px;font-size:31.5px;color:#333;transform:scaleX(1.0266);">A</span>
<span class="t" style="left:1057.15px;top:207px;font-size:13.5px;color:#3b8cf5;transform:scaleX(0.8065);font-weight:bold">1</span>
<svg class="i" style="left:1096.8px;top:190.0px" width="27.3" height="23.0" viewBox="1096.8 190.0 27.3 23.0" ><path d="M1098.8 192.9H1122.1M1098.8 198.7H1113.7M1098.8 204.5H1122.1M1098.8 210.3H1113.7" stroke="#3b8cf5" stroke-width="1.8" fill="none"/></svg>
<svg class="i" style="left:1140.9px;top:190.0px" width="27.7" height="23.0" viewBox="1140.9 190.0 27.7 23.0" ><path d="M1142.9 192.9H1166.6M1147.4 198.7H1162.3M1142.9 204.5H1166.6M1147.4 210.3H1162.3" stroke="#333" stroke-width="1.8" fill="none"/></svg>
<svg class="i" style="left:1185.6px;top:190.0px" width="27.4" height="23.0" viewBox="1185.6 190.0 27.4 23.0" ><path d="M1187.6 192.9H1211.0M1195.8 198.7H1211.0M1187.6 204.5H1211.0M1195.8 210.3H1211.0" stroke="#333" stroke-width="1.8" fill="none"/></svg>
<svg class="i" style="left:1229.9px;top:190.0px" width="27.7" height="23.0" viewBox="1229.9 190.0 27.7 23.0" ><path d="M1231.9 192.9H1255.6M1231.9 198.7H1255.6M1231.9 204.5H1255.6M1231.9 210.3H1255.6" stroke="#333" stroke-width="1.8" fill="none"/></svg>
<svg class="i" style="left:1291.9px;top:192.0px" width="27.3" height="25.7" viewBox="1291.9 192.0 27.3 25.7" ><path d="M1293.9 195.1H1317.2M1293.9 214.7H1317.2" stroke="#333" stroke-width="1.8" fill="none"/><path d="M1308 200.6H1317.2M1308 204.9H1317.2M1308 209.2H1317.2M1300 204.9H1307" stroke="#3388f0" stroke-width="2" fill="none"/><path d="M1293.9 204.9L1301.6 199.4V210.4Z" fill="#3388f0"/></svg>
<svg class="i" style="left:1336.6px;top:192.0px" width="27.4" height="25.7" viewBox="1336.6 192.0 27.4 25.7" ><path d="M1338.6 195.1H1362M1338.6 214.7H1362" stroke="#333" stroke-width="1.8" fill="none"/><path d="M1338.6 200.6H1347.8M1338.6 204.9H1347.8M1338.6 209.2H1347.8M1348.8 204.9H1355.8" stroke="#3388f0" stroke-width="2" fill="none"/><path d="M1362 204.9L1354.3 199.4V210.4Z" fill="#3388f0"/></svg>
<svg class="i" style="left:1398.6px;top:190.0px" width="27.3" height="27.0" viewBox="1398.6 190.0 27.3 27.0" ><path d="M1400.6 192.9H1423.9M1400.6 198.8H1423.9" stroke="#b0b0b0" stroke-width="1.8" fill="none"/><path d="M1412.2 203.4L1417.4 209.2H1414.2V214.8H1410.2V209.2H1407Z" fill="#a9cdf9"/></svg>
<svg class="i" style="left:1491.0px;top:188.0px" width="32.0" height="32.0" viewBox="1491.0 188.0 32.0 32.0" ><path d="M1503.2 194.7H1520.7M1503.2 204.4H1520.7M1503.2 214.1H1520.7" stroke="#333" stroke-width="1.8" fill="none"/></svg>
<span class="t" style="left:1492.37px;top:189px;font-size:10.5px;color:#333;transform:scaleX(1.2849);">1</span>
<span class="t" style="left:1493.36px;top:199px;font-size:10.5px;color:#333;transform:scaleX(1.1022);">2</span>
<span class="t" style="left:1493.31px;top:209px;font-size:10.5px;color:#333;transform:scaleX(1.0869);">3</span>
<svg class="i" style="left:1584.8px;top:188.4px" width="32.2" height="31.6" viewBox="1584.8 188.4 32.2 31.6" ><rect x="1587.8" y="191.4" width="26.2" height="25.6" rx="2.5" fill="#fff" stroke="#a8a8a8" stroke-width="2"/><path d="M1597.6 194.6V201.4H1590.6Z" fill="#a9cdf9"/><path d="M1603.4 213.6V206.8H1610.4Z" fill="#a9cdf9"/></svg>
<svg class="i" style="left:1779.7px;top:134.4px" width="46.7" height="42.9" viewBox="1779.7 134.4 46.7 42.9" ><rect x="1782.7" y="137.4" width="40.2" height="28.8" rx="3.5" fill="none" stroke="#333" stroke-width="2.1"/><text x="1789.4" y="159.6" font-family="Liberation Sans, sans-serif" font-size="19.5" fill="#333" stroke="#333" stroke-width=".4" textLength="26.5" lengthAdjust="spacingAndGlyphs">Aa</text><path d="M1814.4 156.2A2.2 2.2 0 0 1 1817.4 156.1L1823.7 161.6A2.2 2.2 0 0 1 1823.9 164.7L1814.6 174.6H1803.6L1801.3 172.4A2.2 2.2 0 0 1 1801.2 169.4Z" fill="#f0aa3e" stroke="#fff" stroke-width="1.2"/></svg>
<svg class="i" style="left:1878.2px;top:131.9px" width="35.1" height="46.3" viewBox="1878.2 131.9 35.1 46.3" ><path d="M1899.7 135V154" stroke="#333" stroke-width="3.2" stroke-linecap="round" fill="none"/><path d="M1888.4 160.5V156.6A3 3 0 0 1 1891.4 153.6H1907.4A3 3 0 0 1 1910.4 156.6V160.5Z" fill="#333"/><path d="M1888.4 160.5V166C1888.4 171 1885.5 175 1881 175.2H1906.4A4 4 0 0 0 1910.4 171.2V160.5" fill="none" stroke="#333" stroke-width="2.1" stroke-linejoin="round" stroke-linecap="round"/><path d="M1894.6 175V170.2M1900.2 175V166.6" stroke="#333" stroke-width="2" fill="none"/></svg>
<svg class="i" style="left:1990.0px;top:135.4px" width="43.2" height="42.8" viewBox="1990.0 135.4 43.2 42.8" ><rect x="1993.5" y="138.4" width="10.8" height="11.6" fill="#f4b8b3"/><rect x="1993.5" y="150.6" width="10.8" height="12" fill="#f8deab"/><rect x="1993.5" y="163.2" width="10.8" height="11.6" fill="#c8e6a8"/><path d="M2030.2 156V140.9A2.5 2.5 0 0 0 2027.7 138.4H1995.5A2.5 2.5 0 0 0 1993 140.9V172.9A2.5 2.5 0 0 0 1995.5 175.4H2011" fill="none" stroke="#b8b8b8" stroke-width="2"/><path d="M2004.6 138.4V175.4M2017.4 138.4V150.4M2004.6 150.4H2030.2M2004.6 162.8H2011" fill="none" stroke="#b8b8b8" stroke-width="1.8"/><text x="2016.4" y="173.6" font-family="Liberation Serif, serif" font-style="italic" font-size="22" fill="#b0b0b0">f</text><path d="M2024 168.6L2030.6 175.2M2030.6 168.6L2024 175.2" stroke="#b0b0b0" stroke-width="1.8" fill="none"/></svg>
<svg class="i" style="left:2135.7px;top:136.3px" width="42.3" height="38.4" viewBox="2135.7 136.3 42.3 38.4" ><path d="M2138.2 139.4H2142.6V171.6H2138.2M2175.6 139.4H2171.2V171.6H2175.6" fill="none" stroke="#333" stroke-width="2.1"/><path d="M2148.4 155.5H2165M2156.7 147.2V163.8" stroke="#6dc02d" stroke-width="4.4" fill="none"/></svg>
<!-- icons: right panel -->
<svg class="i" style="left:2092.0px;top:252.2px" width="30.6" height="30.7" viewBox="2092.0 252.2 30.6 30.7" ><rect x="2095" y="255.2" width="24.6" height="24.7" fill="none" stroke="#333" stroke-width="1.9" stroke-dasharray="3.4 2.6"/></svg>
<span class="t" style="left:2098.65px;top:257px;font-size:24px;color:#333;transform:scaleX(1.0862);">A</span>
<svg class="i" style="left:2381.3px;top:252.2px" width="30.3" height="29.9" viewBox="2381.3 252.2 30.3 29.9" ><rect x="2384.4" y="255.3" width="24.2" height="23.8" rx="3.5" fill="none" stroke="#444" stroke-width="2"/><path d="M2389.6 262.4H2403.4M2389.6 267.2H2403.4M2389.6 272H2403.4" stroke="#444" stroke-width="1.9" fill="none"/></svg>
<svg class="i" style="left:2237.0px;top:406.0px" width="31.0" height="36.0" viewBox="2237.0 406.0 31.0 36.0" ><path d="M2240.2 416.6H2262M2243.6 430.8H2265.4" stroke="#222" stroke-width="2.1" fill="none"/><path d="M2265.6 416.6L2257.4 410.8V422.4Z" fill="#222"/><path d="M2240 430.8L2248.2 425V436.6Z" fill="#222"/></svg>
<svg class="i" style="left:2072.0px;top:481.5px" width="33.0" height="33.0" viewBox="2072.0 481.5 33.0 33.0" ><circle cx="2088.5" cy="497.4" r="14.1" fill="none" stroke="#333" stroke-width="2"/></svg>
<span class="t" style="left:2082.76px;top:487px;font-size:23px;color:#333;transform:scaleX(0.8675);font-weight:bold">?</span>
<svg class="i" style="left:1982.7px;top:1341.8px" width="26.7" height="32.8" viewBox="1982.7 1341.8 26.7 32.8" ><rect x="1985.9" y="1347.4" width="20.4" height="24.2" rx="3" fill="none" stroke="#2b6fcc" stroke-width="2.1"/><path d="M1991.4 1347.2A4.6 3.8 0 0 1 2000.8 1347.2V1349.2H1991.4Z" fill="#2b6fcc"/><path d="M1990.4 1355.8H2001.8M1990.4 1359.6H2001.8M1990.4 1363.4H2001.8M1990.4 1367.2H1999" stroke="#3b8cf5" stroke-width="1.7" fill="none"/></svg>
<!-- icons: status bar -->
<svg class="i" style="left:2274.5px;top:1453.5px" width="32.0" height="33.5" viewBox="2274.5 1453.5 32.0 33.5" ><circle cx="2287.5" cy="1466.5" r="9.8" fill="none" stroke="#333" stroke-width="2"/><path d="M2294.5 1473.5L2304.0 1484.0" stroke="#333" stroke-width="2.2" fill="none"/><path d="M2282.3 1466.5H2292.7" stroke="#333" stroke-width="2" fill="none"/></svg>
<svg class="i" style="left:2330.5px;top:1453.5px" width="32.0" height="33.5" viewBox="2330.5 1453.5 32.0 33.5" ><circle cx="2343.5" cy="1466.5" r="9.8" fill="none" stroke="#333" stroke-width="2"/><path d="M2350.5 1473.5L2360.0 1484.0" stroke="#333" stroke-width="2.2" fill="none"/><path d="M2338.3 1466.5H2348.7M2343.5 1461.3V1471.7" stroke="#333" stroke-width="2" fill="none"/></svg>
<svg class="i" style="left:2559.4px;top:1456.5px" width="26.6" height="28.3" viewBox="2559.4 1456.5 26.6 28.3" ><circle cx="2572.7" cy="1466" r="6.6" fill="none" stroke="#333" stroke-width="2"/><path d="M2566.8 1471.4C2563.6 1474 2562.4 1477.6 2562.4 1481.8H2583C2583 1477.6 2581.8 1474 2578.6 1471.4" fill="none" stroke="#333" stroke-width="2" stroke-linejoin="round"/></svg>
<!-- icons: right rail -->
<svg class="i" style="left:2559.0px;top:257.0px" width="25.0" height="24.2" viewBox="2559.0 257.0 25.0 24.2" ><path d="M2562 260L2571 269.1L2562 278.2M2571.6 260L2580.6 269.1L2571.6 278.2" fill="none" stroke="#555" stroke-width="2.1" stroke-linecap="round" stroke-linejoin="round"/></svg>
<svg class="i" style="left:2555.0px;top:307.5px" width="31.6" height="31.3" viewBox="2555.0 307.5 31.6 31.3" ><path d="M2568.12 313.88L2568.22 310.15L2573.38 310.15L2573.48 313.88L2575.42 314.69L2578.13 312.12L2581.78 315.77L2579.21 318.48L2580.02 320.42L2583.75 320.52L2583.75 325.68L2580.02 325.78L2579.21 327.72L2581.78 330.43L2578.13 334.08L2575.42 331.51L2573.48 332.32L2573.38 336.05L2568.22 336.05L2568.12 332.32L2566.18 331.51L2563.47 334.08L2559.82 330.43L2562.39 327.72L2561.58 325.78L2557.85 325.68L2557.85 320.52L2561.58 320.42L2562.39 318.48L2559.82 315.77L2563.47 312.12L2566.18 314.69ZM2575.7000000000003 323.1A4.9 4.9 0 1 0 2565.9 323.1A4.9 4.9 0 1 0 2575.7000000000003 323.1Z" fill="#555" fill-rule="evenodd" stroke="#555" stroke-width="1" stroke-linejoin="round"/></svg>
<svg class="i" style="left:2557.7px;top:363.7px" width="27.0" height="25.7" viewBox="2557.7 363.7 27.0 25.7" ><g transform="rotate(-35 2571.2 376.6)"><rect x="2558.2" y="372.4" width="14.6" height="8.4" rx="4.2" fill="none" stroke="#555" stroke-width="2.1" stroke-linecap="round" stroke-linejoin="round"/><rect x="2569.6" y="372.4" width="14.6" height="8.4" rx="4.2" fill="none" stroke="#555" stroke-width="2.1" stroke-linecap="round" stroke-linejoin="round"/></g></svg>
<svg class="i" style="left:2553.7px;top:416.4px" width="34.5" height="31.1" viewBox="2553.7 416.4 34.5 31.1" ><path d="M2559.2 419.5H2582.8A2.6 2.6 0 0 1 2585.4 422.1V435.4A2.6 2.6 0 0 1 2582.8 438H2571.6V444.6L2563.6 438H2559.2A2.6 2.6 0 0 1 2556.6 435.4V422.1A2.6 2.6 0 0 1 2559.2 419.5Z" fill="none" stroke="#555" stroke-width="2.1" stroke-linecap="round" stroke-linejoin="round"/><path d="M2561.6 425H2580.4M2561.6 428.8H2580.4M2561.6 432.6H2580.4" stroke="#555" stroke-width="1.7" fill="none"/></svg>
<svg class="i" style="left:2555.8px;top:470.5px" width="30.2" height="30.2" viewBox="2555.8 470.5 30.2 30.2" ><path d="M2566.2 476A12 12 0 1 1 2560 482.6" fill="none" stroke="#555" stroke-width="2.1" stroke-linecap="round" stroke-linejoin="round"/><path d="M2571.6 478.6V486.4L2575.8 491" fill="none" stroke="#555" stroke-width="2.1" stroke-linecap="round" stroke-linejoin="round"/><path d="M2557.6 481.6L2563.4 472.4L2569.2 481Z" fill="#555"/></svg>
<svg class="i" style="left:2555.8px;top:525.4px" width="28.9" height="28.3" viewBox="2555.8 525.4 28.9 28.3" ><path d="M2558.6 533.6L2562.6 537.8L2572.6 528.2" fill="none" stroke="#555" stroke-width="2.1" stroke-linecap="round" stroke-linejoin="round"/><path d="M2570 538.8L2582 550.8M2582 538.8L2570 550.8" fill="none" stroke="#555" stroke-width="2.1" stroke-linecap="round" stroke-linejoin="round"/></svg>
<svg class="i" style="left:2561.0px;top:577.8px" width="20.2" height="31.8" viewBox="2561.0 577.8 20.2 31.8" ><path d="M2574.2 588V599.4A3.1 3.1 0 0 1 2568 599.4V586.6A5.6 5.6 0 0 1 2578.2 586.6V599.8A7.1 7.1 0 0 1 2564 599.8V588.6" fill="none" stroke="#555" stroke-width="2.1" stroke-linecap="round" stroke-linejoin="round"/></svg>
<svg class="i" style="left:2553.7px;top:631.0px" width="34.5" height="34.5" viewBox="2553.7 631.0 34.5 34.5" ><path d="M2583.6 640.6A14.2 14.2 0 1 0 2585.1 646.4" fill="none" stroke="#555" stroke-width="2.1" stroke-linecap="round" stroke-linejoin="round"/><path d="M2564.6 648.4L2569.4 653.2L2578.6 643.6" fill="none" stroke="#555" stroke-width="3" stroke-linecap="round" stroke-linejoin="round"/></svg>
<svg class="i" style="left:2553.7px;top:686.4px" width="34.5" height="31.0" viewBox="2553.7 686.4 34.5 31.0" ><path d="M2565 706H2559.4A2.8 2.8 0 0 1 2556.6 703.2V692.2A2.8 2.8 0 0 1 2559.4 689.4H2577.4A2.8 2.8 0 0 1 2580.2 692.2V695.6" fill="none" stroke="#555" stroke-width="2.1" stroke-linecap="round" stroke-linejoin="round"/><rect x="2565.2" y="697.2" width="20.2" height="17.2" rx="2.8" fill="none" stroke="#555" stroke-width="2.1" stroke-linecap="round" stroke-linejoin="round"/><path d="M2560.6 694.4H2575M2560.6 698.6H2563.2M2569 702.6H2581.6M2569 706.6H2581.6" stroke="#555" stroke-width="1.7" fill="none"/></svg>
<svg class="i" style="left:2555.0px;top:740.4px" width="31.6" height="31.6" viewBox="2555.0 740.4 31.6 31.6" ><path d="M2582.6 754.4V746.2A2.8 2.8 0 0 0 2579.8 743.4H2560.8A2.8 2.8 0 0 0 2558 746.2V765.4A2.8 2.8 0 0 0 2560.8 768.2H2569" fill="none" stroke="#555" stroke-width="2.1" stroke-linecap="round" stroke-linejoin="round"/><path d="M2562.4 749.6H2578M2562.4 753.6H2572.4M2562.4 757.6H2568.4" stroke="#555" stroke-width="1.6" fill="none"/><path d="M2573.6 756.2H2583A1.8 1.8 0 0 1 2584.8 758V764.6A1.8 1.8 0 0 1 2583 766.4H2580.2L2578 769.6L2575.8 766.4H2573.6A1.8 1.8 0 0 1 2571.8 764.6V758A1.8 1.8 0 0 1 2573.6 756.2Z" fill="#555"/></svg>
<svg class="i" style="left:2555.0px;top:794.5px" width="31.6" height="32.4" viewBox="2555.0 794.5 31.6 32.4" ><path d="M2557.6 800.6H2569.2M2563.4 797.4V800.6M2566.8 800.6C2565.8 805 2562.4 808 2558 809.6M2560 800.6C2561.2 805 2564.4 808 2568.8 809.6" fill="none" stroke="#2b6fcc" stroke-width="1.6"/><path d="M2573.4 798H2577.8A2.2 2.2 0 0 1 2580 800.2V803.6" fill="none" stroke="#2b6fcc" stroke-width="2.2"/><path d="M2575.6 802.8H2584.4L2580 808Z" fill="#2b6fcc"/><path d="M2569.6 822.6H2565.2A2.2 2.2 0 0 1 2563 820.4V817" fill="none" stroke="#2b6fcc" stroke-width="2.2"/><path d="M2558.6 817.8H2567.4L2563 812.6Z" fill="#2b6fcc"/></svg>
<span class="t" style="left:2572.08px;top:810px;font-size:17.5px;color:#2b6fcc;transform:scaleX(1.1025);">A</span>
<span class="t" style="left:2555.02px;top:852px;font-size:25px;color:#555;transform:scaleX(0.9252);">(</span>
<span class="t" style="left:2565.05px;top:854px;font-size:22px;color:#555;transform:scaleX(1.0533);font-style:italic">x</span>
<span class="t" style="left:2579.16px;top:852px;font-size:25px;color:#555;transform:scaleX(0.9182);">)</span>
<svg class="i" style="left:2557.2px;top:902.6px" width="26.7" height="32.4" viewBox="2557.2 902.6 26.7 32.4" ><path d="M2574.2 905.8L2560.6 920.8H2570L2566.8 931.8L2580.6 916.6H2571.2Z" fill="none" stroke="#555" stroke-width="2.1" stroke-linecap="round" stroke-linejoin="round"/></svg>
<svg class="i" style="left:2553.7px;top:960.7px" width="32.3" height="25.6" viewBox="2553.7 960.7 32.3 25.6" ><path d="M2561.8 968.4V966.8A3 3 0 0 1 2564.8 963.8H2575A3 3 0 0 1 2578 966.8V968.4M2561.8 978.6V980.2A3 3 0 0 0 2564.8 983.2H2575A3 3 0 0 0 2578 980.2V978.6M2557 973.5H2583" fill="none" stroke="#555" stroke-width="2.1" stroke-linecap="round" stroke-linejoin="round"/><circle cx="2557.6" cy="973.5" r="2.5" fill="#555"/><circle cx="2570" cy="973.5" r="2.9" fill="#555"/><circle cx="2582.4" cy="973.5" r="2.5" fill="#555"/></svg>
</div>
</body></html>
